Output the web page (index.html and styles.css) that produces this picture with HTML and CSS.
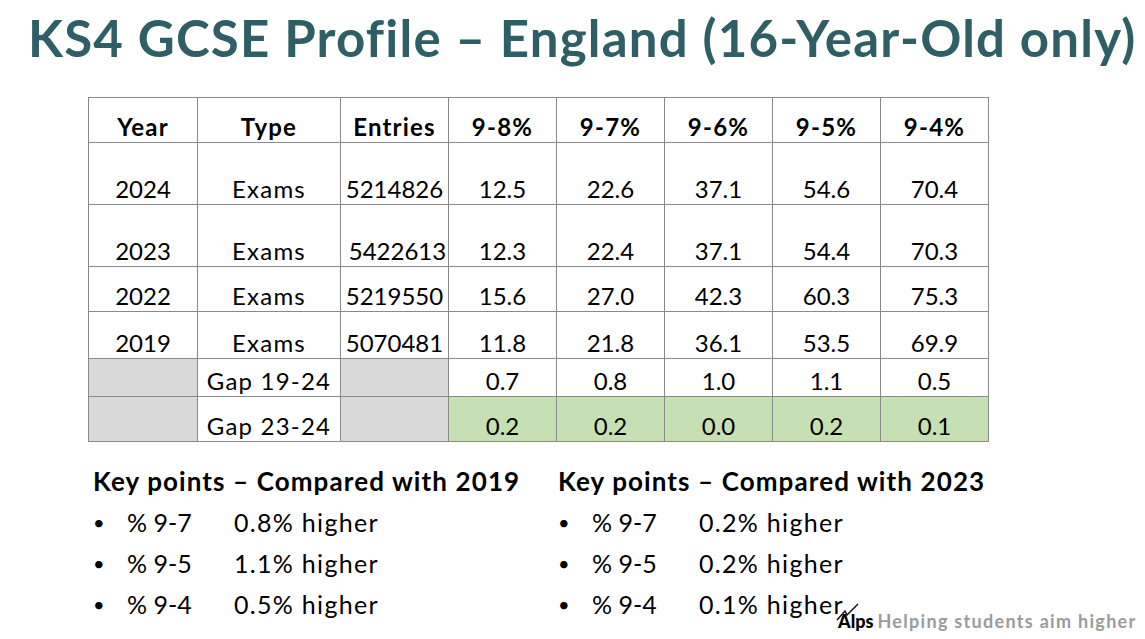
FILE: index.html
```html
<!DOCTYPE html>
<html lang="en">
<head>
<meta charset="utf-8">
<title>KS4 GCSE Profile</title>
<link rel="stylesheet" href="styles.css">
</head>
<body>
<div class="slide">
  <h1 class="title">KS4 GCSE Profile – England (16-Year-Old only)</h1>
  <table class="data">
    <colgroup>
      <col class="c1"><col class="c2"><col class="c3"><col class="c4"><col class="c5"><col class="c6"><col class="c7"><col class="c8">
    </colgroup>
    <tr class="r-head"><th>Year</th><th>Type</th><th>Entries</th><th>9-8%</th><th>9-7%</th><th>9-6%</th><th>9-5%</th><th>9-4%</th></tr>
    <tr class="r-tall"><td>2024</td><td class="word">Exams</td><td>5214826</td><td>12.5</td><td>22.6</td><td>37.1</td><td>54.6</td><td>70.4</td></tr>
    <tr class="r-tall"><td>2023</td><td class="word">Exams</td><td class="shift">5422613</td><td>12.3</td><td>22.4</td><td>37.1</td><td>54.4</td><td>70.3</td></tr>
    <tr class="r-mid"><td>2022</td><td class="word">Exams</td><td>5219550</td><td>15.6</td><td>27.0</td><td>42.3</td><td>60.3</td><td>75.3</td></tr>
    <tr class="r-mid2"><td>2019</td><td class="word">Exams</td><td>5070481</td><td>11.8</td><td>21.8</td><td>36.1</td><td>53.5</td><td>69.9</td></tr>
    <tr class="r-gap1"><td class="grey"></td><td class="word">Gap 19-24</td><td class="grey"></td><td>0.7</td><td>0.8</td><td>1.0</td><td>1.1</td><td>0.5</td></tr>
    <tr class="r-gap2"><td class="grey"></td><td class="word">Gap 23-24</td><td class="grey"></td><td class="green">0.2</td><td class="green">0.2</td><td class="green">0.0</td><td class="green">0.2</td><td class="green">0.1</td></tr>
  </table>
  <div class="points">
    <section class="pcol">
      <h2 class="phead">Key points – Compared with 2019</h2>
      <ul class="plist">
        <li><span class="dot">•</span><span class="lab">% 9-7</span><span class="val">0.8% higher</span></li>
        <li><span class="dot">•</span><span class="lab">% 9-5</span><span class="val">1.1% higher</span></li>
        <li><span class="dot">•</span><span class="lab">% 9-4</span><span class="val">0.5% higher</span></li>
      </ul>
    </section>
    <section class="pcol right">
      <h2 class="phead">Key points – Compared with 2023</h2>
      <ul class="plist">
        <li><span class="dot">•</span><span class="lab">% 9-7</span><span class="val">0.2% higher</span></li>
        <li><span class="dot">•</span><span class="lab">% 9-5</span><span class="val">0.2% higher</span></li>
        <li><span class="dot">•</span><span class="lab">% 9-4</span><span class="val">0.1% higher</span></li>
      </ul>
    </section>
  </div>
  <div class="logo">
    <svg class="mark" width="24" height="20" viewBox="0 0 24 20"><path d="M1 18 L9 9 L11 13 L22 2" fill="none" stroke="#111" stroke-width="1.5"/></svg>
    <span class="alps">Alps</span><span class="tag">Helping students aim higher</span>
  </div>
</div>
</body>
</html>
```

FILE: styles.css
```css
html, body {
  margin: 0;
  padding: 0;
  background: #fff;
}
body {
  font-family: Lato, "Noto Sans", sans-serif;
  color: #000;
}
.slide {
  position: relative;
  width: 1145px;
  height: 639px;
  overflow: hidden;
}
.title {
  margin: 0;
  padding: 6px 0 0 28px;
  font-size: 51px;
  line-height: 64px;
  font-weight: 700;
  letter-spacing: 1.2px;
  color: #2f5e66;
  white-space: nowrap;
}
.data {
  margin: 27px 0 0 88px;
  border-collapse: collapse;
  table-layout: fixed;
  width: 900px;
  font-size: 24px;
}
.c1 { width: 109px; }
.c2 { width: 143px; }
.c3 { width: 108px; }
.c4 { width: 108px; }
.c5 { width: 108px; }
.c6 { width: 108px; }
.c7 { width: 108px; }
.c8 { width: 108px; }
.data th, .data td {
  border: 1px solid #8a8a8a;
  text-align: center;
  vertical-align: bottom;
  line-height: 24px;
  padding: 0 0 3px;
  white-space: nowrap;
}
.data th {
  font-weight: 700;
  letter-spacing: 1.2px;
}
.data td.word { letter-spacing: 1.2px; }
.r-head { height: 45px; }
.r-tall { height: 62px; }
.r-mid { height: 45px; }
.r-mid2 { height: 47px; }
.r-gap1 { height: 38px; }
.r-gap2 { height: 45px; }
.shift { padding-left: 6px !important; }
.grey { background: #d9d9d9; }
.green { background: #c6e0b4; }
.points {
  display: flex;
  margin: 22px 0 0 93px;
}
.pcol { width: 465px; }
.phead {
  margin: 0;
  font-size: 26px;
  line-height: 34px;
  font-weight: 700;
  letter-spacing: 1.1px;
}
.plist {
  list-style: none;
  margin: 4px 0 0;
  padding: 0;
  font-size: 25px;
}
.plist li {
  display: grid;
  grid-template-columns: 34px 107px auto;
  height: 41px;
  line-height: 41px;
}
.dot {
  font-size: 20px;
  padding-left: 0;
}
.val { letter-spacing: 1.3px; }
.logo {
  position: absolute;
  left: 836px;
  top: 601px;
  display: flex;
  align-items: flex-end;
  height: 30px;
  white-space: nowrap;
}
.mark {
  position: absolute;
  left: 0;
  top: 1px;
}
.alps {
  font-weight: 900;
  font-size: 18px;
  line-height: 20px;
  color: #000;
  margin-right: 4px;
  padding-left: 2px;
}
.tag {
  font-weight: 700;
  font-size: 18px;
  line-height: 20px;
  letter-spacing: 1.3px;
  color: #9b9b9b;
  white-space: nowrap;
}
```
